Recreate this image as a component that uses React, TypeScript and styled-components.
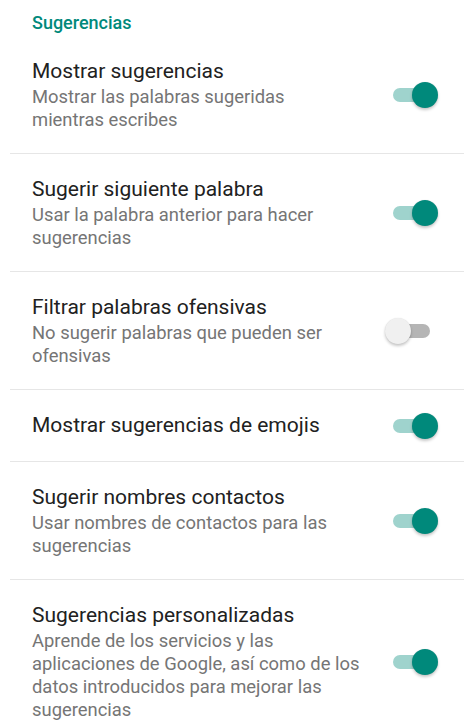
import React from "react";
import styled, { createGlobalStyle } from "styled-components";

const colors = {
  Accent: "#00897b",
  AccentTrack: "#9fd3cd",
  Title: "#212121",
  Summary: "#757575",
  Divider: "#e6e6e6",
  ThumbOff: "#f0f0f0",
  TrackOff: "#b5b5b5",
};

const GlobalStyle = createGlobalStyle`
  body {
    margin: 0;
    background: #ffffff;
    font-family: Roboto, "Noto Sans", "Liberation Sans", sans-serif;
    -webkit-font-smoothing: antialiased;
  }
`;

const PageS = styled.div`
  width: 474px;
  min-height: 724px;
  background: #ffffff;
  overflow: hidden;
`;

const HeaderS = styled.div`
  padding: 11px 0 1px 32px;
  font-size: 18px;
  line-height: 24px;
  font-weight: 500;
  color: ${colors.Accent};
`;

const ListS = styled.div`
  margin: 0 10px;
`;

const RowS = styled.div<{ last?: boolean }>`
  display: flex;
  align-items: center;
  padding: 22px 26px 22px 22px;
  border-bottom: 1px solid ${(props) => (props.last ? "transparent" : colors.Divider)};
`;

const TextColS = styled.div`
  flex: 1;
  min-width: 0;
`;

const TitleS = styled.div`
  font-size: 21px;
  line-height: 27px;
  color: ${colors.Title};
  white-space: nowrap;
`;

const SummaryS = styled.div`
  font-size: 18.4px;
  line-height: 23px;
  color: ${colors.Summary};
  white-space: nowrap;
`;

const SwitchS = styled.div`
  position: relative;
  width: 45px;
  height: 26px;
  flex: 0 0 auto;
`;

const TrackS = styled.div<{ on: boolean }>`
  position: absolute;
  left: 0;
  top: 6px;
  width: 37px;
  height: 14px;
  border-radius: 7px;
  background: ${(props) => (props.on ? colors.AccentTrack : colors.TrackOff)};
`;

const ThumbS = styled.div<{ on: boolean }>`
  position: absolute;
  top: 0;
  left: ${(props) => (props.on ? "19px" : "-8px")};
  width: 26px;
  height: 26px;
  border-radius: 50%;
  background: ${(props) => (props.on ? colors.Accent : colors.ThumbOff)};
  box-shadow: 0 2px 3px rgba(0, 0, 0, 0.22), 0 0 1px rgba(0, 0, 0, 0.12);
`;

interface IPref {
  title: string;
  summary: string[];
  on: boolean;
}

const prefs: IPref[] = [
  {
    title: "Mostrar sugerencias",
    summary: ["Mostrar las palabras sugeridas", "mientras escribes"],
    on: true,
  },
  {
    title: "Sugerir siguiente palabra",
    summary: ["Usar la palabra anterior para hacer", "sugerencias"],
    on: true,
  },
  {
    title: "Filtrar palabras ofensivas",
    summary: ["No sugerir palabras que pueden ser", "ofensivas"],
    on: false,
  },
  { title: "Mostrar sugerencias de emojis", summary: [], on: true },
  {
    title: "Sugerir nombres contactos",
    summary: ["Usar nombres de contactos para las", "sugerencias"],
    on: true,
  },
  {
    title: "Sugerencias personalizadas",
    summary: [
      "Aprende de los servicios y las",
      "aplicaciones de Google, así como de los",
      "datos introducidos para mejorar las",
      "sugerencias",
    ],
    on: true,
  },
];

const Switch = ({ on }: { on: boolean }) => (
  <SwitchS>
    <TrackS on={on} />
    <ThumbS on={on} />
  </SwitchS>
);

export default function App() {
  return (
    <PageS>
      <GlobalStyle />
      <HeaderS>Sugerencias</HeaderS>
      <ListS>
        {prefs.map((p, i) => (
          <RowS key={p.title} last={i === prefs.length - 1}>
            <TextColS>
              <TitleS>{p.title}</TitleS>
              {p.summary.map((line) => (
                <SummaryS key={line}>{line}</SummaryS>
              ))}
            </TextColS>
            <Switch on={p.on} />
          </RowS>
        ))}
      </ListS>
    </PageS>
  );
}
